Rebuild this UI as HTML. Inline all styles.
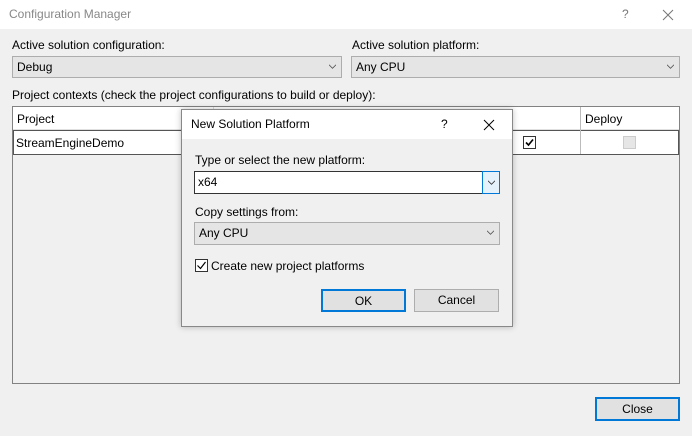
<!DOCTYPE html>
<html><head><style>
*{box-sizing:border-box;margin:0;padding:0}
body{width:692px;height:436px;background:#f0f0f0;font-family:"Segoe UI","Liberation Sans",sans-serif;font-size:12px;color:#000;position:relative;overflow:hidden}
.a{position:absolute}
.combo{position:absolute;background:#e5e5e5;border:1px solid #adadad;padding:3px 4px;line-height:14px}
.chev{position:absolute;right:5px;top:6px;width:7px;height:7px}
.btn{position:absolute;background:#e1e1e1;border:1px solid #adadad;text-align:center;line-height:20px}
</style></head><body>
<div class="a" style="left:0;top:0;width:692px;height:29px;background:#fff"></div>
<div class="a" style="left:9px;top:7px;color:#888">Configuration Manager</div>
<div class="a" style="left:622px;top:7px;color:#777">?</div>
<svg class="a" style="left:662px;top:9px" width="12" height="12"><path d="M1 1L11 11M11 1L1 11" stroke="#777" stroke-width="1"/></svg>

<div class="a" style="left:12px;top:38px">Active solution configuration:</div>
<div class="a" style="left:352px;top:38px">Active solution platform:</div>
<div class="combo" style="left:12px;top:56px;width:330px;height:22px">Debug<svg class="chev" viewBox="0 0 8 8"><path d="M0 2L4 6L8 2" stroke="#555" fill="none"/></svg></div>
<div class="combo" style="left:351px;top:56px;width:329px;height:22px">Any CPU<svg class="chev" viewBox="0 0 8 8"><path d="M0 2L4 6L8 2" stroke="#555" fill="none"/></svg></div>
<div class="a" style="left:12px;top:88px">Project contexts (check the project configurations to build or deploy):</div>

<div class="a" style="left:12px;top:106px;width:668px;height:278px;border:1px solid #828282;background:#f0f0f0"></div>
<div class="a" style="left:13px;top:107px;width:666px;height:23px;background:#fff;border-bottom:1px solid #e0e0e0"></div>
<div class="a" style="left:13px;top:130px;width:666px;height:25px;background:#fff;border:1px solid #555"></div>
<div class="a" style="left:580px;top:107px;width:1px;height:47px;background:#bbb"></div>
<div class="a" style="left:213px;top:107px;width:1px;height:23px;background:#ddd"></div>
<div class="a" style="left:17px;top:112px">Project</div>
<div class="a" style="left:585px;top:112px">Deploy</div>
<div class="a" style="left:16px;top:136px">StreamEngineDemo</div>
<div class="a" style="left:523px;top:136px;width:13px;height:13px;border:1px solid #333;background:#fff"></div>
<svg class="a" style="left:524px;top:137px" width="11" height="11"><path d="M2 5.5L4.5 8L9 2.5" stroke="#000" stroke-width="1.6" fill="none"/></svg>
<div class="a" style="left:623px;top:136px;width:13px;height:13px;border:1px solid #ccc;background:#e6e6e6"></div>

<div class="a" style="left:181px;top:109px;width:332px;height:218px;background:#f0f0f0;border:1px solid #888;box-shadow:0 0 6px rgba(0,0,0,.25)"></div>
<div class="a" style="left:182px;top:110px;width:330px;height:29px;background:#fff"></div>
<div class="a" style="left:191px;top:117px">New Solution Platform</div>
<div class="a" style="left:441px;top:117px">?</div>
<svg class="a" style="left:483px;top:119px" width="12" height="12"><path d="M1 1L11 11M11 1L1 11" stroke="#000" stroke-width="1"/></svg>
<div class="a" style="left:195px;top:153px">Type or select the new platform:</div>
<div class="a" style="left:194px;top:171px;width:306px;height:23px;background:#fff;border:1px solid #333;padding:3px 3px;line-height:14px">x64</div>
<div class="a" style="left:482px;top:171px;width:18px;height:23px;background:#e5f1fb;border:1px solid #0078d7"><svg class="chev" style="right:4px;top:7px" viewBox="0 0 8 8"><path d="M0 2L4 6L8 2" stroke="#333" fill="none"/></svg></div>
<div class="a" style="left:195px;top:205px">Copy settings from:</div>
<div class="combo" style="left:194px;top:222px;width:306px;height:23px">Any CPU<svg class="chev" viewBox="0 0 8 8"><path d="M0 2L4 6L8 2" stroke="#555" fill="none"/></svg></div>
<div class="a" style="left:195px;top:259px;width:13px;height:13px;border:1px solid #333;background:#fff"></div>
<svg class="a" style="left:196px;top:260px" width="11" height="11"><path d="M1.5 5.5L4.5 8.5L9.5 2" stroke="#000" stroke-width="1.2" fill="none"/></svg>
<div class="a" style="left:211px;top:259px">Create new project platforms</div>
<div class="btn" style="left:321px;top:289px;width:85px;height:23px;border:2px solid #0078d7">OK</div>
<div class="btn" style="left:414px;top:289px;width:85px;height:23px">Cancel</div>

<div class="btn" style="left:595px;top:397px;width:85px;height:24px;border:2px solid #0078d7">Close</div>
</body></html>
